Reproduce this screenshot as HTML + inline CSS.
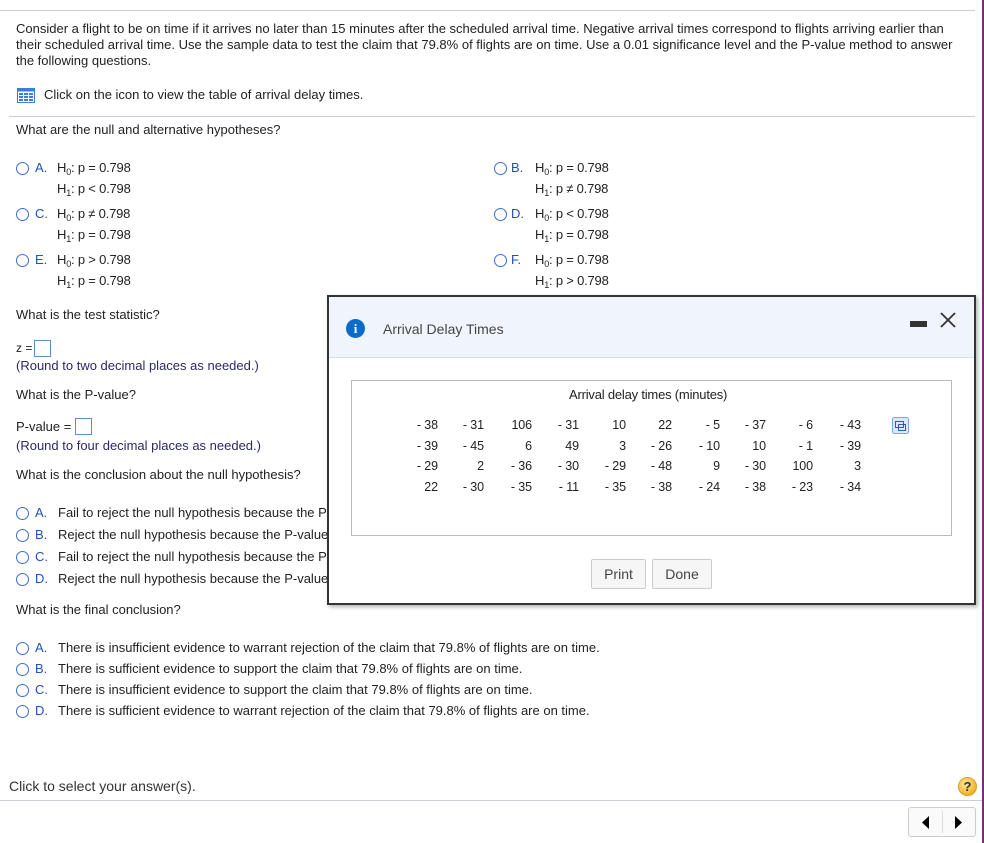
<!DOCTYPE html>
<html><head><meta charset="utf-8">
<style>
*{margin:0;padding:0;box-sizing:border-box}
body{width:984px;height:843px;background:#fff;position:relative;overflow:hidden;font-family:"Liberation Sans",Arial,sans-serif;font-size:13px;color:#222}
.t{position:absolute;white-space:nowrap;line-height:15px}
.m{letter-spacing:-0.2px;font-size:13px}
.c{position:absolute;width:13px;height:13px;border:1.5px solid #3b6fd0;border-radius:50%}
.l{position:absolute;color:#2050b8;line-height:15px}
sub{font-size:9px;vertical-align:-3px;line-height:0}
.bx{position:absolute;border:1px solid #5a8fd8;width:17px;height:17px;background:#fff}
.num{position:absolute;text-align:right;width:40px;line-height:14px;letter-spacing:-0.1px;font-size:12.5px}
.btn{position:absolute;border:1px solid #ccc;border-radius:2px;background:#f6f6f6;color:#444;font-size:14px;text-align:center;line-height:29px}
</style></head><body>
<div style="position:absolute;left:0;top:10px;width:975px;height:1px;background:#ccd"></div>
<div style="position:absolute;right:0;top:0;width:2px;height:843px;background:#7a2c7a"></div>

<div class="t" style="left:16px;top:21px">Consider a flight to be on time if it arrives no later than 15 minutes after the scheduled arrival time. Negative arrival times correspond to flights arriving earlier than</div>
<div class="t" style="left:16px;top:37px">their scheduled arrival time. Use the sample data to test the claim that 79.8% of flights are on time. Use a 0.01 significance level and the P-value method to answer</div>
<div class="t" style="left:16px;top:53px">the following questions.</div>

<svg style="position:absolute;left:17px;top:88px" width="18" height="15" viewBox="0 0 18 15"><rect x="0.5" y="0.5" width="17" height="14" fill="#fff" stroke="#3a7de0"/><rect x="0.5" y="0.5" width="17" height="3" fill="#3a7de0"/><g fill="#3a7de0"><rect x="2" y="5" width="4" height="2"/><rect x="7" y="5" width="4" height="2"/><rect x="12" y="5" width="4" height="2"/><rect x="2" y="8" width="4" height="2"/><rect x="7" y="8" width="4" height="2"/><rect x="12" y="8" width="4" height="2"/><rect x="2" y="11" width="4" height="2"/><rect x="7" y="11" width="4" height="2"/><rect x="12" y="11" width="4" height="2"/></g></svg>
<div class="t" style="left:44px;top:87px">Click on the icon to view the table of arrival delay times.</div>
<div style="position:absolute;left:9px;top:116px;width:966px;height:1px;background:#ccd"></div>
<div class="t" style="left:16px;top:122px">What are the null and alternative hypotheses?</div>

<div class="c" style="left:16px;top:162px"></div><div class="l" style="left:35px;top:160px">A.</div>
<div class="t m" style="left:57px;top:160px">H<sub>0</sub>: p = 0.798</div>
<div class="t m" style="left:57px;top:181px">H<sub>1</sub>: p &lt; 0.798</div>
<div class="c" style="left:16px;top:208px"></div><div class="l" style="left:35px;top:206px">C.</div>
<div class="t m" style="left:57px;top:206px">H<sub>0</sub>: p ≠ 0.798</div>
<div class="t m" style="left:57px;top:227px">H<sub>1</sub>: p = 0.798</div>
<div class="c" style="left:16px;top:254px"></div><div class="l" style="left:35px;top:252px">E.</div>
<div class="t m" style="left:57px;top:252px">H<sub>0</sub>: p &gt; 0.798</div>
<div class="t m" style="left:57px;top:273px">H<sub>1</sub>: p = 0.798</div>

<div class="c" style="left:494px;top:162px"></div><div class="l" style="left:511px;top:160px">B.</div>
<div class="t m" style="left:535px;top:160px">H<sub>0</sub>: p = 0.798</div>
<div class="t m" style="left:535px;top:181px">H<sub>1</sub>: p ≠ 0.798</div>
<div class="c" style="left:494px;top:208px"></div><div class="l" style="left:511px;top:206px">D.</div>
<div class="t m" style="left:535px;top:206px">H<sub>0</sub>: p &lt; 0.798</div>
<div class="t m" style="left:535px;top:227px">H<sub>1</sub>: p = 0.798</div>
<div class="c" style="left:494px;top:254px"></div><div class="l" style="left:511px;top:252px">F.</div>
<div class="t m" style="left:535px;top:252px">H<sub>0</sub>: p = 0.798</div>
<div class="t m" style="left:535px;top:273px">H<sub>1</sub>: p &gt; 0.798</div>

<div class="t" style="left:16px;top:307px">What is the test statistic?</div>
<div class="t" style="left:16px;top:341px;font-size:12px">z =</div><div class="bx" style="left:34px;top:340px"></div>
<div class="t" style="left:16px;top:358px;color:#2a2a6a">(Round to two decimal places as needed.)</div>
<div class="t" style="left:16px;top:387px">What is the P-value?</div>
<div class="t" style="left:16px;top:419px">P-value =</div><div class="bx" style="left:75px;top:418px"></div>
<div class="t" style="left:16px;top:438px;color:#2a2a6a">(Round to four decimal places as needed.)</div>
<div class="t" style="left:16px;top:467px">What is the conclusion about the null hypothesis?</div>

<div class="c" style="left:16px;top:507px"></div><div class="l" style="left:35px;top:505px">A.</div><div class="t" style="left:58px;top:505px">Fail to reject the null hypothesis because the P</div>
<div class="c" style="left:16px;top:529px"></div><div class="l" style="left:35px;top:527px">B.</div><div class="t" style="left:58px;top:527px">Reject the null hypothesis because the P-value</div>
<div class="c" style="left:16px;top:551px"></div><div class="l" style="left:35px;top:549px">C.</div><div class="t" style="left:58px;top:549px">Fail to reject the null hypothesis because the P</div>
<div class="c" style="left:16px;top:573px"></div><div class="l" style="left:35px;top:571px">D.</div><div class="t" style="left:58px;top:571px">Reject the null hypothesis because the P-value</div>

<div class="t" style="left:16px;top:602px">What is the final conclusion?</div>
<div class="c" style="left:16px;top:642px"></div><div class="l" style="left:35px;top:640px">A.</div><div class="t" style="left:58px;top:640px">There is insufficient evidence to warrant rejection of the claim that 79.8% of flights are on time.</div>
<div class="c" style="left:16px;top:663px"></div><div class="l" style="left:35px;top:661px">B.</div><div class="t" style="left:58px;top:661px">There is sufficient evidence to support the claim that 79.8% of flights are on time.</div>
<div class="c" style="left:16px;top:684px"></div><div class="l" style="left:35px;top:682px">C.</div><div class="t" style="left:58px;top:682px">There is insufficient evidence to support the claim that 79.8% of flights are on time.</div>
<div class="c" style="left:16px;top:705px"></div><div class="l" style="left:35px;top:703px">D.</div><div class="t" style="left:58px;top:703px">There is sufficient evidence to warrant rejection of the claim that 79.8% of flights are on time.</div>

<div class="t" style="left:9px;top:778px;font-size:14px;line-height:16px;color:#333">Click to select your answer(s).</div>
<div style="position:absolute;left:0;top:800px;width:982px;height:1px;background:#ccd"></div>
<div style="position:absolute;left:958px;top:777px;width:19px;height:19px;border-radius:50%;background:radial-gradient(circle at 40% 35%,#ffe9a0,#f0b429 70%,#d99a10);border:1px solid #d6a020;text-align:center;font-weight:bold;font-size:13px;line-height:17px;color:#333">?</div>
<div style="position:absolute;left:908px;top:807px;width:68px;height:30px;border:1px solid #ccc;border-radius:3px;background:#fafafa">
<div style="position:absolute;left:33px;top:3px;width:1px;height:22px;background:#ddd"></div>
<svg style="position:absolute;left:13px;top:8px" width="8" height="13"><polygon points="7,0 7,13 0,6.5" fill="#000"/></svg>
<svg style="position:absolute;left:46px;top:8px" width="8" height="13"><polygon points="0,0 0,13 7,6.5" fill="#000"/></svg>
</div>

<div style="position:absolute;left:327px;top:295px;width:649px;height:310px;border:2px solid #333;background:#fff;box-shadow:2px 2px 4px rgba(0,0,0,0.3)">
 <div style="position:absolute;left:0;top:0;width:645px;height:61px;background:#f0f5fd;border-bottom:1px solid #cfe0f5"></div>
 <div style="position:absolute;left:17px;top:22px;width:19px;height:19px;border-radius:50%;background:#0a6cc8;color:#fff;font-weight:bold;font-size:13px;line-height:19px;text-align:center;font-family:'Liberation Serif',serif">i</div>
 <div class="t" style="left:54px;top:24px;font-size:14px;line-height:16px;color:#444">Arrival Delay Times</div>
 <div style="position:absolute;left:581px;top:24px;width:17px;height:6px;background:#333"></div>
 <svg style="position:absolute;left:610px;top:14px" width="18" height="18"><path d="M2 2 L16 16 M16 2 L2 16" stroke="#333" stroke-width="1.8"/></svg>
 <div style="position:absolute;left:22px;top:83px;width:601px;height:156px;border:1px solid #bbb"></div>
 <div class="t" style="left:240px;top:90px;letter-spacing:-0.2px">Arrival delay times (minutes)</div>
 <div id="tbl"></div>
 <svg style="position:absolute;left:563px;top:120px" width="17" height="17"><rect x="0.5" y="0.5" width="16" height="16" rx="2" fill="#dbe8fb" stroke="#7aa6e6"/><rect x="3.5" y="4.5" width="8" height="6" fill="none" stroke="#2b5fb4"/><rect x="6.5" y="7.5" width="7" height="6" fill="none" stroke="#2b5fb4"/></svg>
 <div class="btn" style="left:262px;top:262px;width:55px;height:30px">Print</div>
 <div class="btn" style="left:323px;top:262px;width:60px;height:30px">Done</div>
</div>
<script>
var rows=[["- 38","- 31","106","- 31","10","22","- 5","- 37","- 6","- 43"],["- 39","- 45","6","49","3","- 26","- 10","10","- 1","- 39"],["- 29","2","- 36","- 30","- 29","- 48","9","- 30","100","3"],["22","- 30","- 35","- 11","- 35","- 38","- 24","- 38","- 23","- 34"]];
var rx=[438,484,532,579,626,672,720,766,813,861],ry=[425,446,466,487],h="";
for(var i=0;i<4;i++)for(var j=0;j<10;j++)h+='<div class="num" style="left:'+(rx[j]-40-329)+'px;top:'+(ry[i]-7-297)+'px">'+rows[i][j]+'</div>';
document.getElementById("tbl").outerHTML=h;
</script>
</body></html>
